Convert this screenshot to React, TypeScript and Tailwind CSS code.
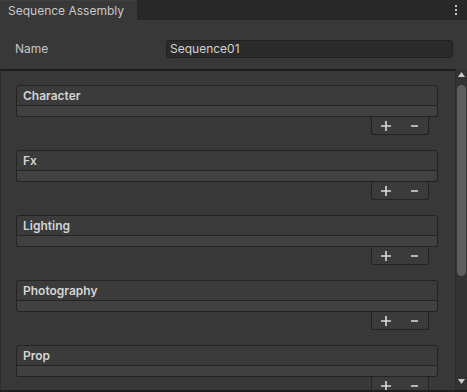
import React from 'react';

const lists = ['Character', 'Fx', 'Lighting', 'Photography', 'Prop'];

const ListBlock: React.FC<{ title: string }> = ({ title }) => (
    <div className="mt-[15px] first:mt-[14px]">
        {/* header */}
        <div className="h-[21px] bg-[#3b3b3b] border border-[#232323] rounded-t-[3px] flex items-center pl-[6px]">
            <span className="text-[12px] font-semibold text-[#d4d4d4]">{title}</span>
        </div>
        {/* empty body */}
        <div className="h-[11px] bg-[#414141] border border-t-0 border-[#232323] rounded-b-[3px]"></div>
        {/* footer */}
        <div className="flex justify-end pr-[9px]">
            <div className="w-[58px] h-[18px] bg-[#3b3b3b] border border-t-0 border-[#232323] rounded-b-[3px] flex items-center pl-[9px] pr-[10px] justify-between">
                <svg width="10" height="10" viewBox="0 0 10 10">
                    <path d="M5 0 V10 M0 5 H10" stroke="#dcdcdc" strokeWidth="1.6" />
                </svg>
                <svg width="7" height="10" viewBox="0 0 7 10">
                    <path d="M0 5 H7" stroke="#d4d4d4" strokeWidth="1.6" />
                </svg>
            </div>
        </div>
    </div>
);

const App: React.FC = () => {
    return (
        <div className="w-[467px] h-[392px] bg-[#383838] flex flex-col overflow-hidden font-['Inter','Liberation_Sans',sans-serif]">
            {/* Tab bar */}
            <div className="h-[20px] bg-[#282828] flex items-stretch shrink-0">
                <div className="w-[137px] bg-[#383838] flex items-center pl-[8px] border-t border-[#3e3e3e]">
                    <span className="text-[12px] text-[#c8c8c8]">Sequence Assembly</span>
                </div>
                <div className="flex-1"></div>
                <div className="w-[20px] flex flex-col items-center justify-center gap-[2px] mr-[1px]">
                    <span className="w-[2px] h-[2px] bg-[#c4c4c4]"></span>
                    <span className="w-[2px] h-[2px] bg-[#c4c4c4]"></span>
                    <span className="w-[2px] h-[2px] bg-[#c4c4c4]"></span>
                </div>
            </div>

            {/* Name row */}
            <div className="h-[49px] flex items-center pt-[8px] pl-[15px] pr-[14px] shrink-0">
                <span className="w-[151px] text-[12px] text-[#c4c4c4]">Name</span>
                <div className="flex-1 h-[18px] bg-[#2a2a2a] border border-[#212121] rounded-[3px] flex items-center pl-[3px]">
                    <span className="text-[12px] text-[#d2d2d2]">Sequence01</span>
                </div>
            </div>

            {/* Scroll view */}
            <div className="flex-1 flex min-h-0 border-b-2 border-[#1f1f1f]">
                <div className="flex-1 border-t-2 border-l border-[#1c1c1c] border-l-[#2c2c2c] pl-[15px] pr-[17px] overflow-hidden">
                    {lists.map((l) => (
                        <ListBlock key={l} title={l} />
                    ))}
                </div>
                <div className="w-[12px] bg-[#333333] flex flex-col items-center relative border-l border-[#2c2c2c]">
                    <svg width="7" height="5" viewBox="0 0 7 5" className="mt-[3px]">
                        <path d="M3.5 0 L7 5 L0 5 Z" fill="#c8c8c8" />
                    </svg>
                    <div className="w-[9px] h-[191px] bg-[#5e5e5e] rounded-full mt-[8px]"></div>
                    <div className="flex-1"></div>
                    <svg width="7" height="5" viewBox="0 0 7 5" className="mb-[6px]">
                        <path d="M0 0 L7 0 L3.5 5 Z" fill="#c8c8c8" />
                    </svg>
                </div>
            </div>
        </div>
    );
};

export default App;
